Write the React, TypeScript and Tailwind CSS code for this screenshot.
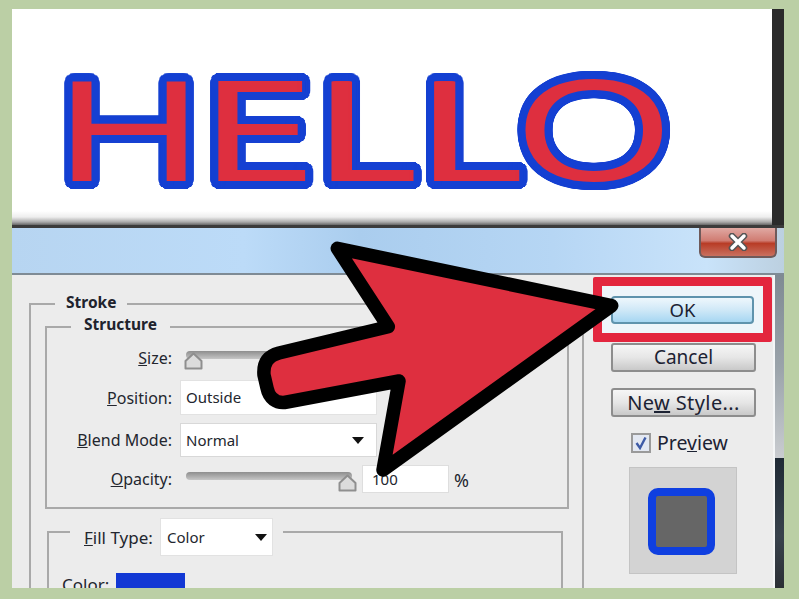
import React from "react";

const BLUE = "#1540d2";
const RED = "#de2f3f";

function shadow(scale: number, thicken: number) {
  const parts: string[] = [];
  for (let d = 1; d <= thicken; d++) parts.push(`${(d / scale).toFixed(2)}px 0 0 ${RED}`);
  const n = 40;
  for (const base of thicken ? [0, thicken / 2, thicken] : [0]) {
    for (let i = 0; i < n; i++) {
      const a = (i / n) * Math.PI * 2;
      parts.push(`${((base + 8 * Math.cos(a)) / scale).toFixed(2)}px ${(8 * Math.sin(a)).toFixed(2)}px 0 ${BLUE}`);
    }
  }
  return parts.join(",");
}

function Letter({ ch, cls, scale, thicken }: { ch: string; cls: string; scale: number; thicken: number }) {
  return (
    <span className={`block shrink-0 origin-left ${cls}`} style={{ textShadow: shadow(scale, thicken) }}>
      {ch}
    </span>
  );
}

function Thumb() {
  return (
    <svg width="19" height="18" viewBox="0 0 19 18" className="absolute top-0 left-0">
      <path d="M9.5 1.5 L17.5 9 V16.5 H1.5 V9 Z" fill="#dcdcdc" stroke="#8f8f8f" strokeWidth="2" strokeLinejoin="round" />
    </svg>
  );
}

function Track({ className }: { className: string }) {
  return <div className={`h-[8px] rounded-sm bg-gradient-to-b from-[#8e8e8e] to-[#c6c6c6] ${className}`} />;
}

function Caret() {
  return <div className="w-0 h-0 border-x-[6px] border-x-transparent border-t-[7px] border-t-[#111]" />;
}

function Row({ label, className, children }: { label: React.ReactNode; className: string; children: React.ReactNode }) {
  return (
    <div className={`grid grid-cols-[125px_1fr] gap-x-[8px] ${className}`}>
      <div className="flex items-center justify-end text-[16px]">
        <span>{label}</span>
      </div>
      {children}
    </div>
  );
}

const btn =
  "w-[145px] flex items-center justify-center rounded-[3px] border-2 border-[#8d8d8d] bg-gradient-to-b from-[#f6f6f6] via-[#e6e6e6] to-[#c9c9c9] text-[#1c2233] leading-none";

export default function App() {
  return (
    <div
      className="relative w-[799px] h-[599px] overflow-hidden bg-[#bbcfa5] pt-[9px] pl-[12px]"
      style={{ fontFamily: '"Noto Sans", sans-serif' }}
    >
      <div className="flex flex-col w-[772px] h-[579px]">
        {/* canvas with HELLO */}
        <div className="flex h-[216px] shrink-0">
          <div className="flex-1 overflow-hidden bg-[linear-gradient(to_bottom,#fff_0,#fff_202px,#eee_208px,#aaa_213px,#666_216px)]">
            <div
              className="flex pl-[44px] pt-[50px] text-[145px] leading-none text-[#de2f3f]"
              style={{ fontFamily: '"Liberation Sans", sans-serif' }}
            >
              <Letter ch="H" cls="w-[150px] scale-x-[1.395]" scale={1.395} thicken={0} />
              <Letter ch="E" cls="w-[111px] scale-x-[1.04]" scale={1.04} thicken={5} />
              <Letter ch="L" cls="w-[102px] scale-x-[1.22]" scale={1.22} thicken={4} />
              <Letter ch="L" cls="w-[97px] scale-x-[1.27]" scale={1.27} thicken={4} />
              <Letter ch="O" cls="w-[150px] scale-x-[1.38]" scale={1.38} thicken={0} />
            </div>
          </div>
          <div className="w-[12px] bg-[#2b2b2b]" />
        </div>
        <div className="h-[3px] shrink-0 bg-[#3b3b3b]" />

        {/* title bar */}
        <div className="flex justify-end h-[45px] shrink-0 pr-[7px] bg-[linear-gradient(to_right,#b7d5f1,#bcdbf8_30%,#aacdee_45%,#b6d6f4_70%,#c9e3fa_90%,#bcd0e0)]">
          <div className="flex items-center justify-center w-[78px] h-[30px] rounded-b-md border-2 border-t-0 border-[#6f5a5a] bg-[linear-gradient(to_bottom,#e0a9a3,#d07c72_45%,#b83c26_55%,#c9705f_100%)]">
            <svg width="22" height="18" viewBox="0 0 22 18">
              <path d="M5 3 L17 15 M17 3 L5 15" stroke="#555" strokeWidth="6.5" strokeLinecap="round" />
              <path d="M5 3 L17 15 M17 3 L5 15" stroke="#fff" strokeWidth="3.5" strokeLinecap="round" />
            </svg>
          </div>
        </div>

        {/* dialog body */}
        <div className="flex flex-1 min-h-0 overflow-hidden border-t-2 border-[#7f8b95]">
          <div className="flex w-[761px] bg-[#ececec] text-[#23262e] text-[15px] leading-none">
            {/* left pane */}
            <div className="w-[581px] shrink-0">
              <div className="ml-[17px] mt-[28px] w-[555px] h-[400px] border-2 border-[#a9a9a9]">
                <div className="-mt-[13px] ml-[24px] w-fit px-[11px] h-[20px] bg-[#ececec] font-bold text-[15.5px] text-[#20222c] leading-[20px]">
                  Stroke
                </div>

                {/* Structure */}
                <div className="ml-[14px] mt-[14px] w-[524px] h-[183px] border-2 border-[#a9a9a9]">
                  <div className="-mt-[15px] ml-[24px] w-fit px-[13px] h-[23px] bg-[#ececec] font-bold text-[15.5px] text-[#20222c] leading-[23px]">
                    Structure
                  </div>
                  <Row
                    className="mt-[3px] h-[38px]"
                    label={
                      <>
                        <u>S</u>ize:
                      </>
                    }
                  >
                    <div className="relative pl-[6px] pt-[12px]">
                      <Track className="w-[170px]" />
                      <div className="absolute left-[4px] top-[13px]">
                        <Thumb />
                      </div>
                    </div>
                  </Row>
                  <Row
                    className="mt-[3px] h-[35px]"
                    label={
                      <>
                        <u>P</u>osition:
                      </>
                    }
                  >
                    <div className="flex items-center w-[197px] pl-[5px] bg-white border border-[#e2e2e2]">Outside</div>
                  </Row>
                  <Row
                    className="mt-[8px] h-[34px]"
                    label={
                      <>
                        <u>B</u>lend Mode:
                      </>
                    }
                  >
                    <div className="flex items-center justify-between w-[197px] pl-[5px] pr-[12px] bg-white border border-[#d8d8d8]">
                      Normal
                      <Caret />
                    </div>
                  </Row>
                  <Row
                    className="mt-[8px] h-[28px]"
                    label={
                      <>
                        <u>O</u>pacity:
                      </>
                    }
                  >
                    <div className="flex items-start">
                      <div className="relative w-[176px] pl-[6px] pt-[7px]">
                        <Track className="w-[166px]" />
                        <div className="absolute left-[158px] top-[9px]">
                          <Thumb />
                        </div>
                      </div>
                      <div className="flex items-center ml-[6px] w-[87px] h-[28px] pl-[9px] bg-white border border-[#dedede]">
                        100
                      </div>
                      <span className="ml-[5px] mt-[6px] text-[18px]">%</span>
                    </div>
                  </Row>
                </div>

                {/* Fill type */}
                <div className="ml-[16px] mt-[22px] w-[516px] h-[100px] border-2 border-[#a9a9a9]">
                  <div className="-mt-[15px] ml-[21px] w-fit flex items-center pl-[14px] pr-[10px] bg-[#ececec]">
                    <span className="w-[68px] whitespace-nowrap text-[17px]">
                      <u>F</u>ill Type:
                    </span>
                    <div className="flex items-center justify-between ml-[8px] w-[113px] h-[38px] pl-[6px] pr-[5px] bg-white border border-[#e2e2e2]">
                      Color
                      <Caret />
                    </div>
                  </div>
                  <div className="flex items-start ml-[13px] mt-[17px]">
                    <span className="mt-[3px] w-[48px] text-[17px]">Color:</span>
                    <div className="ml-[6px] w-[69px] h-[30px] bg-[#1238d4]" />
                  </div>
                </div>
              </div>
            </div>

            {/* right pane */}
            <div className="flex flex-col pt-[2px]">
              <div className="w-[179px] h-[65px] px-[9px] py-[10px] rounded-[2px] border-[9px] border-[#e3263e] bg-[#eef5fa] flex items-center">
                <div className="w-[145px] h-[28px] pt-[2px] flex items-center justify-center rounded-[4px] border-2 border-[#5f93ad] bg-gradient-to-b from-[#eef7fc] via-[#cfe8f7] to-[#a6d6f2] text-[18.5px] text-[#1c2233] leading-none">
                  OK
                </div>
              </div>
              <div className={`${btn} h-[29px] ml-[18px] mt-[1px] text-[19px]`}>Cancel</div>
              <div className={`${btn} h-[29px] ml-[18px] mt-[16px] text-[20px] tracking-[0.4px]`}>
                <span>
                  Ne<u>w</u> Style...
                </span>
              </div>
              <div className="flex items-center h-[20px] ml-[38px] mt-[16px] text-[19.5px] text-[#1c2233]">
                <div className="flex items-center justify-center w-[20px] h-[20px] border-2 border-[#9a9a9a] bg-[#e3e8f2]">
                  <svg width="14" height="14" viewBox="0 0 14 14">
                    <path d="M2.5 7 L6 12 L11.5 1.5" fill="none" stroke="#3d5aa6" strokeWidth="2.4" />
                  </svg>
                </div>
                <span className="ml-[6px]">
                  Pre<u>v</u>iew
                </span>
              </div>
              <div className="ml-[36px] mt-[14px] w-[108px] h-[107px] pl-[18px] pt-[20px] bg-[#d3d3d3] border border-[#c4c4c4]">
                <div className="w-[67px] h-[67px] rounded-[10px] border-[8px] border-[#0f3fe0] bg-[#666666]" />
              </div>
            </div>
          </div>
          <div className="flex-1 flex flex-col border-l-2 border-[#f4f6f7]">
            <div className="h-[183px] bg-[linear-gradient(to_bottom,#7f8a93,#9aa3aa_50%,#c9ccd0)]" />
            <div className="flex-1 bg-[linear-gradient(to_bottom,#1f2a35,#38424c_60%,#2b2f35)]" />
          </div>
        </div>
      </div>

      {/* arrow overlay */}
      <svg className="absolute inset-0 pointer-events-none" width="799" height="599" viewBox="0 0 799 599">
        <path
          d="M337.3 248.3 L611.7 305.7 L383 470 L399 381 L287 402 C276 404 269 398 267 388 L264 375 C263 363 268 356 279 353 L388.3 326.7 Z"
          fill="#de2f3f"
          stroke="#000"
          strokeWidth="13.5"
          strokeLinejoin="round"
        />
      </svg>
    </div>
  );
}
